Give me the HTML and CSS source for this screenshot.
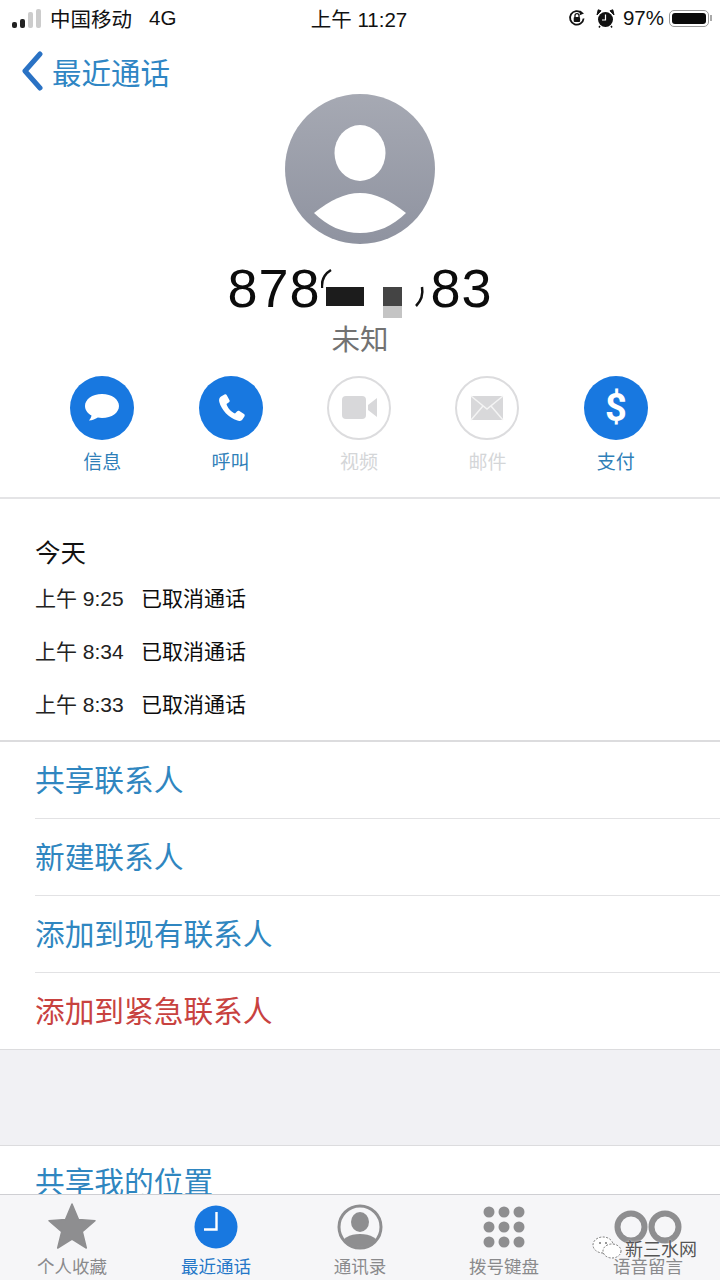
FILE: index.html
```html
<!DOCTYPE html>
<html lang="zh-CN">
<head>
  <meta charset="UTF-8" />
  <meta name="viewport" content="width=device-width, initial-scale=1.0" />
  <title>最近通话</title>
  <link rel="stylesheet" href="styles.css">
</head>
<body>
  <div class="phone">

    <div class="status-bar">
      <div class="status-left">
        <div class="signal">
          <i class="bar b1"></i><i class="bar b2"></i><i class="bar b3"></i><i class="bar b4"></i>
        </div>
        <span class="carrier">中国移动</span>
        <span class="net">4G</span>
      </div>
      <div class="status-time">上午 11:27</div>
      <div class="status-right">
        <svg width="18" height="18" viewBox="0 0 18 18">
          <path d="M15.600 9.500A6.800 6.800 0 1 1 13.600 4" fill="none" stroke="#111" stroke-width="1.800"/>
          <path d="M12 1.500l4 3-4.300 1.800z" fill="#111"/>
          <rect x="5.700" y="8" width="6.400" height="5" rx="1" fill="#111"/>
          <path d="M7 8V6.600a2 2 0 0 1 4 0V8" fill="none" stroke="#111" stroke-width="1.300"/>
        </svg>
        <svg width="19" height="19" viewBox="0 0 19 19">
          <circle cx="9.500" cy="10.500" r="7.500" fill="#111"/>
          <path d="M1 6L5 1.800 2.200 .8zM18 6L14 1.800l2.800-1z" fill="#111" stroke="#111"/>
          <path d="M9.500 5.500v5.500H6" fill="none" stroke="#fff" stroke-width="1.200"/>
          <path d="M4 17l-1 1.500M15 17l1 1.500" stroke="#111" stroke-width="1.500"/>
        </svg>
        <span class="percent">97%</span>
        <div class="battery"><div class="battery-fill"></div></div>
        <div class="battery-tip"></div>
      </div>
    </div>

    <div class="content">
      <div class="nav">
        <svg class="back-icon" width="24" height="40" viewBox="0 0 24 40">
          <path d="M20 3L5 20l15 17" fill="none" stroke="#2a72c4" stroke-width="5" stroke-linecap="round" stroke-linejoin="round"/>
        </svg>
        <span class="back-text">最近通话</span>
      </div>

      <div class="profile">
        <svg class="avatar" width="150" height="150" viewBox="0 0 150 150">
          <defs>
            <linearGradient id="avatarGrad" x1="0" y1="0" x2="0" y2="1">
              <stop offset="0" stop-color="#a6a9b3"/>
              <stop offset="1" stop-color="#8f93a0"/>
            </linearGradient>
          </defs>
          <circle cx="75" cy="75" r="75" fill="url(#avatarGrad)"/>
          <ellipse cx="75" cy="59" rx="25.500" ry="28" fill="#fff"/>
          <path d="M29 119C45 106 60 99 75 99S105 106 121 119C108 132 92 139 75 139S42 132 29 119z" fill="#fff"/>
        </svg>
        <div class="number">
          <span>878</span>
          <svg class="redacted" width="110" height="56" viewBox="0 0 110 56">
            <path d="M10 8Q0 14 1 26" fill="none" stroke="#111" stroke-width="2.500"/>
            <rect x="5" y="25" width="38" height="19" fill="#1c1c1c"/>
            <rect x="62" y="25" width="19" height="19" fill="#444"/>
            <rect x="62" y="44" width="19" height="12" fill="#c4c4c4"/>
            <path d="M101 25Q103 36 95 44" fill="none" stroke="#111" stroke-width="2.500"/>
          </svg>
          <span>83</span>
        </div>
        <div class="location">未知</div>
      </div>

      <div class="actions">
        <div class="action">
          <div class="action-circle">
            <svg width="40" height="36" viewBox="0 0 40 36">
              <path d="M20 4C10 4 3 9.500 3 16c0 4.200 2.800 7.500 6.500 9.600-.3 2-1.300 3.700-2.700 5 3.500-.2 6.800-1.500 9-3 1.300.2 2.800.4 4.200.4 10 0 17-5.500 17-12S30 4 20 4z" fill="#fff"/>
            </svg>
          </div>
          <div class="action-label">信息</div>
        </div>
        <div class="action">
          <div class="action-circle">
            <svg width="36" height="36" viewBox="0 0 36 36">
              <path d="M8 6.500l3.500-2c1-.5 1.800-.2 2.300.7l2.700 5c.4.800.2 1.500-.5 2l-2.500 1.900c1 3.800 4.300 7.600 8.500 9.400l2.200-2.200c.7-.6 1.400-.7 2.200-.2l4.600 3c.8.600 1 1.400.4 2.300l-2 3c-1 1.400-3 1.900-5 1.200C15.500 27.500 8.500 20 6.300 12c-.6-2.400 0-4.400 1.700-5.500z" fill="#fff"/>
            </svg>
          </div>
          <div class="action-label">呼叫</div>
        </div>
        <div class="action off">
          <div class="action-circle">
            <svg width="38" height="26" viewBox="0 0 38 26">
              <rect x="2" y="1" width="24" height="23" rx="4" fill="#d8d8da"/>
              <path d="M28 10l9-7v19l-9-7z" fill="#d8d8da"/>
            </svg>
          </div>
          <div class="action-label">视频</div>
        </div>
        <div class="action off">
          <div class="action-circle">
            <svg width="34" height="26" viewBox="0 0 34 26">
              <rect x="1" y="1" width="32" height="24" fill="#d8d8da"/>
              <path d="M1 1l16 13L33 1M1 25l12-14M33 25L21 11" fill="none" stroke="#f4f4f4" stroke-width="1.500"/>
            </svg>
          </div>
          <div class="action-label">邮件</div>
        </div>
        <div class="action">
          <div class="action-circle dollar">$</div>
          <div class="action-label">支付</div>
        </div>
      </div>

      <div class="history">
        <div class="history-title">今天</div>
        <div class="call-row"><span class="call-time">上午 9:25</span><span class="call-state">已取消通话</span></div>
        <div class="call-row"><span class="call-time">上午 8:34</span><span class="call-state">已取消通话</span></div>
        <div class="call-row"><span class="call-time">上午 8:33</span><span class="call-state">已取消通话</span></div>
      </div>

      <div class="menu">
        <div class="menu-item">共享联系人</div>
        <div class="menu-item">新建联系人</div>
        <div class="menu-item">添加到现有联系人</div>
        <div class="menu-item danger">添加到紧急联系人</div>
      </div>

      <div class="spacer"></div>

      <div class="menu menu-last">
        <div class="menu-item">共享我的位置</div>
      </div>
    </div>

    <div class="tabbar">
      <div class="tab">
        <svg width="50" height="48" viewBox="0 0 50 48">
          <path d="M25 2l6.500 15.500 16.500 1.300-12.700 10.800 4 16.400L25 37l-14.300 9 4-16.400L2 18.800l16.500-1.300z" fill="#8e8e90" stroke="#8e8e90" stroke-width="1.500" stroke-linejoin="round"/>
        </svg>
        <div class="tab-label">个人收藏</div>
      </div>
      <div class="tab active">
        <svg width="46" height="48" viewBox="0 0 46 48">
          <circle cx="23" cy="25" r="21.500" fill="#1878e0"/>
          <path d="M23.500 10V27.500H11" fill="none" stroke="#fff" stroke-width="2.400"/>
        </svg>
        <div class="tab-label">最近通话</div>
      </div>
      <div class="tab">
        <svg width="46" height="48" viewBox="0 0 46 48">
          <defs>
            <clipPath id="contactClip"><circle cx="23" cy="25" r="20"/></clipPath>
          </defs>
          <circle cx="23" cy="25" r="21" fill="#f6f6f8" stroke="#8e8e90" stroke-width="3"/>
          <ellipse cx="23" cy="20" rx="9" ry="10" fill="#8e8e90"/>
          <ellipse cx="23" cy="43" rx="19" ry="11" fill="#8e8e90" clip-path="url(#contactClip)"/>
        </svg>
        <div class="tab-label">通讯录</div>
      </div>
      <div class="tab">
        <svg width="46" height="48" viewBox="0 0 46 48">
          <g fill="#8e8e90">
            <circle cx="8" cy="10" r="5.500"/><circle cx="23" cy="10" r="5.500"/><circle cx="38" cy="10" r="5.500"/>
            <circle cx="8" cy="25" r="5.500"/><circle cx="23" cy="25" r="5.500"/><circle cx="38" cy="25" r="5.500"/>
            <circle cx="8" cy="40" r="5.500"/><circle cx="23" cy="40" r="5.500"/><circle cx="38" cy="40" r="5.500"/>
          </g>
        </svg>
        <div class="tab-label">拨号键盘</div>
      </div>
      <div class="tab">
        <svg width="68" height="48" viewBox="0 0 68 48">
          <circle cx="17" cy="25" r="13.500" fill="none" stroke="#8e8e90" stroke-width="6"/>
          <circle cx="51" cy="25" r="13.500" fill="none" stroke="#8e8e90" stroke-width="6"/>
        </svg>
        <div class="tab-label">语音留言</div>
      </div>
    </div>

    <div class="watermark">
      <svg width="30" height="24" viewBox="0 0 30 24">
        <g fill="#fff" stroke="#777" stroke-width="1" stroke-dasharray="2 1.500">
          <ellipse cx="11" cy="9" rx="10" ry="8"/>
          <ellipse cx="20" cy="15" rx="9" ry="7"/>
        </g>
        <circle cx="8" cy="7" r="1" fill="#777"/>
        <circle cx="14" cy="7" r="1" fill="#777"/>
      </svg>
      <span>新三水网</span>
    </div>

  </div>
</body>
</html>
```

FILE: styles.css
```css
* {
  box-sizing: border-box;
}

html, body {
  margin: 0;
  padding: 0;
}

body {
  background: #fff;
  font-family: "Liberation Sans", "Noto Sans CJK SC", sans-serif;
  color: #111;
}

.phone {
  position: relative;
  width: 720px;
  height: 1280px;
  display: flex;
  flex-direction: column;
  overflow: hidden;
}

/* status bar */
.status-bar {
  height: 38px;
  flex: none;
  display: grid;
  grid-template-columns: 1fr auto 1fr;
  align-items: center;
  padding: 0 8px 2px 12px;
  font-size: 20.500px;
}

.status-left {
  display: flex;
  align-items: center;
}

.signal {
  display: flex;
  align-items: flex-end;
  gap: 3px;
  width: 38px;
  height: 20px;
}

.bar {
  display: block;
  width: 5px;
  border-radius: 2px;
}

.b1 { height: 6px; background: #222; }
.b2 { height: 9px; background: #222; }
.b3 { height: 16px; background: #ccc; }
.b4 { height: 19px; background: #ccc; }

.net {
  margin-left: 17px;
}

.status-time {
  padding-right: 6px;
}

.status-right {
  display: flex;
  align-items: center;
  justify-content: flex-end;
}

.status-right svg + svg {
  margin-left: 10px;
}

.percent {
  margin-left: 8px;
}

.battery {
  width: 40px;
  height: 17px;
  margin-left: 5px;
  padding: 2px;
  border: 1px solid #999;
  border-radius: 5px;
}

.battery-fill {
  height: 100%;
  background: #0a0a0a;
  border-radius: 3px;
}

.battery-tip {
  width: 2px;
  height: 6px;
  margin-left: 1px;
  background: #aaa;
}

/* scrolling part, cut off by the tab bar */
.content {
  flex: 1;
  min-height: 0;
  overflow: hidden;
}

.nav {
  height: 56px;
  display: flex;
  align-items: center;
  padding: 10px 0 0 20px;
  color: #2f86c4;
}

.back-text {
  margin-left: 8px;
  font-size: 29.500px;
}

.profile {
  display: flex;
  flex-direction: column;
  align-items: center;
}

.number {
  display: flex;
  align-items: center;
  height: 54px;
  margin-top: 17px;
  font-size: 54px;
  letter-spacing: 1px;
  color: #0c0c0c;
}

.redacted {
  margin-top: 4px;
}

.location {
  margin-top: 7px;
  font-size: 28.500px;
  line-height: 36px;
  color: #727272;
}

/* action buttons */
.actions {
  display: grid;
  grid-template-columns: repeat(5, 1fr);
  padding: 18px 40px 0 38px;
  height: 141px;
  border-bottom: 2px solid #e4e4e6;
}

.action {
  display: flex;
  flex-direction: column;
  align-items: center;
}

.action-circle {
  width: 64px;
  height: 64px;
  display: flex;
  align-items: center;
  justify-content: center;
  border-radius: 50%;
  background: #1878e0;
}

.dollar {
  color: #fff;
  font-family: Roboto, sans-serif;
  font-size: 38px;
  font-weight: bold;
}

.action-label {
  margin-top: 10px;
  font-size: 19px;
  line-height: 26px;
  color: #2f7fb8;
}

.off .action-circle {
  background: #fff;
  border: 2px solid #dcdcde;
}

.off .action-label {
  color: #d4d6d8;
}

/* call history */
.history {
  height: 243px;
  padding: 37px 35px 0;
  border-bottom: 2px solid #dcdcde;
}

.history-title {
  font-size: 25.500px;
  line-height: 34px;
}

.call-row {
  display: flex;
  align-items: center;
  height: 53px;
  font-size: 21px;
}

.call-time {
  width: 106px;
  color: #222;
}

.call-state {
  color: #0c0c0c;
}

/* menu rows */
.menu-item {
  height: 77px;
  margin-left: 35px;
  padding-bottom: 3px;
  display: flex;
  align-items: center;
  border-bottom: 1px solid #e2e2e4;
  font-size: 29.700px;
  color: #2f86c0;
}

.menu-item.danger {
  margin-left: 0;
  padding-left: 35px;
  border-bottom-color: #dcdcde;
  color: #c8423f;
}

.spacer {
  height: 96px;
  background: #f1f1f4;
  border-bottom: 1px solid #dcdcde;
}

.menu-last .menu-item {
  height: 72px;
  border-bottom: none;
}

/* tab bar */
.tabbar {
  height: 86px;
  flex: none;
  display: grid;
  grid-template-columns: repeat(5, 144px);
  background: #f6f6f8;
  border-top: 1px solid #cfcfd3;
}

.tab {
  display: flex;
  flex-direction: column;
  align-items: center;
  padding-top: 7px;
  color: #8a8a8c;
}

.tab-label {
  margin-top: 5px;
  font-size: 17.500px;
  line-height: 24px;
}

.tab.active .tab-label {
  color: #2578c8;
}

.watermark {
  position: absolute;
  left: 592px;
  top: 1235px;
  display: flex;
  align-items: center;
  gap: 3px;
  font-size: 18px;
  color: #555;
  text-shadow: 0 0 2px #fff;
}
```
